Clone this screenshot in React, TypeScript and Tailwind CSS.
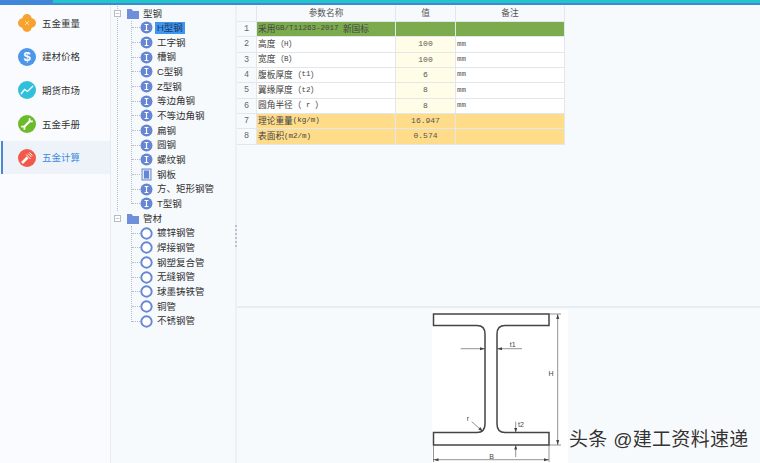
import { Minus } from 'lucide-react';
import type { ReactNode } from 'react';

const FONT = "font-['Liberation_Sans','Noto_Sans_CJK_SC',sans-serif]";

const STEEL = ['H型钢', '工字钢', '槽钢', 'C型钢', 'Z型钢', '等边角钢', '不等边角钢', '扁钢', '圆钢', '螺纹钢', '钢板', '方、矩形钢管', 'T型钢'];
const PIPES = ['镀锌钢管', '焊接钢管', '钢塑复合管', '无缝钢管', '球墨铸铁管', '铜管', '不锈钢管'];

function L({ children }: { children: ReactNode }) {
  return <span className="font-['Liberation_Mono',monospace] text-[7.5px]">{children}</span>;
}

const ROWS: { n: number; name: ReactNode; val: string; note: string; kind: string }[] = [
  { n: 1, name: <>采用<L>GB/T11263-2017 </L>新国标</>, val: '', note: '', kind: 'green' },
  { n: 2, name: <>高度（<L>H</L>）</>, val: '100', note: 'mm', kind: 'input' },
  { n: 3, name: <>宽度（<L>B</L>）</>, val: '100', note: 'mm', kind: 'input' },
  { n: 4, name: <>腹板厚度（<L>t1</L>）</>, val: '6', note: 'mm', kind: 'input' },
  { n: 5, name: <>翼缘厚度（<L>t2</L>）</>, val: '8', note: 'mm', kind: 'input' },
  { n: 6, name: <>圆角半径（<L> r </L>）</>, val: '8', note: 'mm', kind: 'input' },
  { n: 7, name: <>理论重量<L>(kg/m)</L></>, val: '16.947', note: '', kind: 'result' },
  { n: 8, name: <>表面积<L>(m2/m)</L></>, val: '0.574', note: '', kind: 'result' },
];

function Clover() {
  return (
    <svg width="18" height="18" viewBox="0 0 18 18">
      <circle cx="9" cy="4.7" r="4.7" fill="#f6a32f" />
      <circle cx="9" cy="13.3" r="4.7" fill="#f6a32f" />
      <circle cx="4.7" cy="9" r="4.7" fill="#f6a32f" />
      <circle cx="13.3" cy="9" r="4.7" fill="#f6a32f" />
      <path d="M7 7L11 11M11 7L7 11" stroke="#fbd9a4" strokeWidth="1" />
    </svg>
  );
}

function Round({ bg, children }: { bg: string; children: ReactNode }) {
  return <div className={`w-[18px] h-[18px] rounded-full flex items-center justify-center text-white ${bg}`}>{children}</div>;
}

function NavItem({ icon, label, active }: { icon: ReactNode; label: string; active?: boolean }) {
  return (
    <div className={`h-[33.7px] flex items-center ml-px pl-[15px] gap-[6px] border-l-2 ${active ? 'border-[#4a86d6] bg-[#eef3f9] text-[#3f8ae0]' : 'border-transparent text-[#333]'}`}>
      {icon}
      <span className="text-[9.5px] leading-none pt-px">{label}</span>
    </div>
  );
}

function WrenchGlyph() {
  return (
    <svg width="14" height="14" viewBox="0 0 14 14" fill="none" stroke="#fff" strokeWidth="2.2">
      <path d="M3.8 10.2L10.2 3.8" />
      <path d="M9.6 1.2V4.4H12.8" strokeWidth="1.7" />
      <path d="M1.2 9.6H4.4" strokeWidth="1.7" />
      <path d="M4.4 9.6V12.8" strokeWidth="1.7" />
    </svg>
  );
}

function ToolsGlyph() {
  return (
    <svg width="14" height="14" viewBox="0 0 14 14" fill="none" stroke="#fff">
      <path d="M2 12L7.5 6.5" strokeWidth="2.6" />
      <path d="M6 3.5L10.5 8M8 2.5L11.5 6M9.5 1.5L12.5 4.5" strokeWidth="1" />
    </svg>
  );
}

function BoltIcon() {
  return (
    <svg width="13" height="13" viewBox="0 0 13 13" className="shrink-0">
      <circle cx="6.5" cy="6.5" r="6" fill="#6685d2" />
      <path d="M4.6 3.5H8.4M4.6 9.5H8.4M6.5 3.5V9.5" stroke="#fff" strokeWidth="1.2" fill="none" />
    </svg>
  );
}

function PlateIcon() {
  return (
    <svg width="13" height="13" viewBox="0 0 13 13" className="shrink-0">
      <rect x="2" y="1" width="9" height="11" fill="#dfe6f6" stroke="#6685d2" />
      <rect x="4" y="2.5" width="5" height="8" fill="#6685d2" />
    </svg>
  );
}

function RingIcon() {
  return (
    <svg width="13" height="13" viewBox="0 0 13 13" className="shrink-0">
      <circle cx="6.5" cy="6.5" r="5.2" fill="#fff" stroke="#6685d2" strokeWidth="1.9" />
    </svg>
  );
}

function Folder() {
  return (
    <svg width="12" height="11" viewBox="0 0 12 11" className="shrink-0">
      <path d="M0 1H4.5L6 3H12V11H0Z" fill="#6f8fdc" />
    </svg>
  );
}

function GroupHead({ label }: { label: string }) {
  return (
    <div className="h-[14.67px] flex items-center text-[9.5px] text-[#333]">
      <div className="w-[7px] h-[7px] border border-[#b5bcc5] bg-white flex items-center justify-center mr-[6px] shrink-0">
        <Minus size={5} strokeWidth={2} className="text-[#777]" />
      </div>
      <Folder />
      <span className="ml-[4px] leading-none">{label}</span>
    </div>
  );
}

function TreeRow({ label, selected, icon }: { label: string; selected?: boolean; icon: ReactNode }) {
  return (
    <div className="h-[14.67px] flex items-center text-[9.5px] text-[#333]">
      <div className="w-[8px] border-t border-dotted border-[#b5bcc5] shrink-0" />
      {icon}
      <span className={`ml-[2px] px-[2px] leading-[12px] h-[12px] whitespace-nowrap ${selected ? 'bg-[#3f96ee] text-[#1d3a63]' : ''}`}>{label}</span>
    </div>
  );
}

function ParamTable() {
  const cell = 'border-r border-b border-[#e3e7eb] flex items-center';
  return (
    <div className="grid grid-cols-[20px_139px_60px_109px] grid-rows-[16px_repeat(8,15.33px)] w-[328px] text-[8.7px] leading-none text-[#555] font-['Noto_Sans_CJK_SC',sans-serif]">
      <div className={cell} />
      <div className={`${cell} justify-center`}>参数名称</div>
      <div className={`${cell} justify-center`}>值</div>
      <div className={`${cell} justify-center`}>备注</div>
      {ROWS.map((r) => {
        const bg = r.kind === 'green' ? 'bg-[#7cab4e]' : r.kind === 'result' ? 'bg-[#fedc8a]' : 'bg-white';
        const valBg = r.kind === 'input' ? 'bg-[#fffde8]' : bg;
        return (
          <div key={r.n} className="contents">
            <div className={`${cell} justify-center text-[#666] font-['Liberation_Mono',monospace] text-[8.5px]`}>{r.n}</div>
            <div className={`${cell} pl-[1px] whitespace-pre text-[#444] ${bg}`}>{r.name}</div>
            <div className={`${cell} justify-center font-['Liberation_Mono',monospace] text-[8px] ${valBg}`}>{r.val}</div>
            <div className={`${cell} pl-[1px] font-['Liberation_Mono',monospace] text-[7.5px] ${bg}`}>{r.note}</div>
          </div>
        );
      })}
    </div>
  );
}

function BeamDrawing() {
  return (
    <svg width="136" height="153" viewBox="0 0 136 153" className="bg-white">
      <path
        d="M1.5 4H117V15.5H73Q65 15.5 65 24V114Q65 122.5 73 122.5H117V135H1.5V122.5H45Q53 122.5 53 114V24Q53 15.5 45 15.5H1.5Z"
        fill="#fff"
        stroke="#444"
        strokeWidth="1.5"
      />
      <g stroke="#666" strokeWidth="0.7" fill="none">
        <path d="M117 4H129M117 135H129M125.7 4V135" />
        <path d="M28.7 38.7H53M65 38.7H90" />
        <path d="M39.7 111.7L50.3 121" />
        <path d="M83.7 111.7V122.5M83.7 135V147" />
        <path d="M1.5 135V152M117 135V152M1.5 149.7H117" />
      </g>
      <g fill="#444">
        <path d="M125.7 4L124.2 9H127.2ZM125.7 135L124.2 130H127.2Z" />
        <path d="M53 38.7L48 37.2V40.2ZM65 38.7L70 37.2V40.2Z" />
        <path d="M51 121.6L46.3 119.4L48.3 117.1Z" />
        <path d="M83.7 122.5L82.2 118H85.2ZM83.7 135L82.2 139.5H85.2Z" />
        <path d="M1.5 149.7L6.5 148.2V151.2ZM117 149.7L112 148.2V151.2Z" />
      </g>
      <g fill="#444" fontSize="7" fontFamily="Liberation Sans, sans-serif" textAnchor="middle">
        <text x="80.7" y="36.5">t1</text>
        <text x="119" y="66">H</text>
        <text x="36" y="110.5">r</text>
        <text x="89" y="116.5">t2</text>
        <text x="59.7" y="148.5">B</text>
      </g>
    </svg>
  );
}

export default function App() {
  return (
    <div className={`relative w-[760px] h-[463px] overflow-hidden flex flex-col bg-[#f7fafd] ${FONT}`}>
      {/* top strip */}
      <div className="h-[5px] flex shrink-0">
        <div className="w-[53px] bg-[#3f86d8]" />
        <div className="flex-1 bg-[#22c5c8] border-b-2 border-[#3f86d8]" />
      </div>

      <div className="flex-1 flex min-h-0">
        {/* sidebar */}
        <div className="w-[111px] shrink-0 border-r border-[#e6ecf2] bg-[#f9fbfe] pt-px">
          <NavItem icon={<Clover />} label="五金重量" />
          <NavItem icon={<Round bg="bg-[#4c97ea]"><span className="text-[13px] font-bold leading-none">$</span></Round>} label="建材价格" />
          <NavItem
            icon={
              <Round bg="bg-[#2fc0dc]">
                <svg width="14" height="10" viewBox="0 0 14 10" fill="none" stroke="#fff" strokeWidth="1.3">
                  <path d="M1 9L4.5 4.5L7.5 6.5L13 1" />
                </svg>
              </Round>
            }
            label="期货市场"
          />
          <NavItem icon={<Round bg="bg-[#6cbc2a]"><WrenchGlyph /></Round>} label="五金手册" />
          <NavItem icon={<Round bg="bg-[#f2594a]"><ToolsGlyph /></Round>} label="五金计算" active />
        </div>

        {/* tree */}
        <div className="w-[124px] shrink-0 pl-[3px] pt-px">
          <div className="ml-[3px] border-l border-dotted border-[#b5bcc5] pb-[7px]">
            <div className="-ml-[4px]">
              <GroupHead label="型钢" />
            </div>
            <div className="ml-[13px] h-[183.7px] border-l border-dotted border-[#b5bcc5]">
              {STEEL.map((s, i) => (
                <TreeRow key={s} label={s} selected={i === 0} icon={s === '钢板' ? <PlateIcon /> : <BoltIcon />} />
              ))}
            </div>
          </div>
          <GroupHead label="管材" />
          <div className="ml-[17px] h-[95.7px] border-l border-dotted border-[#b5bcc5]">
            {PIPES.map((s) => (
              <TreeRow key={s} label={s} icon={<RingIcon />} />
            ))}
          </div>
        </div>

        {/* vertical splitter */}
        <div className="w-[2px] shrink-0 bg-[#edf1f5] flex flex-col items-center pt-[220px]">
          <div className="w-[2px] h-[22px] border-l-2 border-dotted border-[#b9c3cf]" />
        </div>

        {/* right side */}
        <div className="flex-1 flex flex-col min-w-0">
          <div className="h-[303px] shrink-0 pt-px border-b-2 border-[#e8edf2]">
            <ParamTable />
          </div>
          <div className="flex-1 pl-[195px] pt-[2px]">
            <BeamDrawing />
          </div>
        </div>
      </div>

      {/* watermark */}
      <div className="absolute left-[569px] top-[429px] text-[19px] tracking-[0.3px] leading-[22px] whitespace-nowrap text-[#333] [text-shadow:0_0_2px_#fff,0_0_2px_#fff]">
        头条 @建工资料速递
      </div>
    </div>
  );
}
